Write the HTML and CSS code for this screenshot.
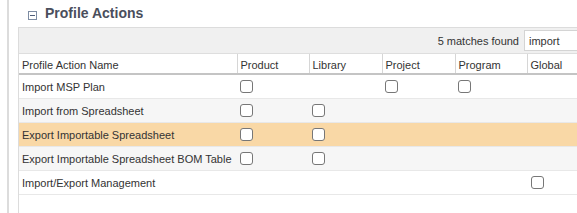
FILE: index.html
```html
<!DOCTYPE html>
<html lang="en">
<head>
  <meta charset="UTF-8" />
  <title>Profile Actions</title>
  <link rel="stylesheet" href="styles.css">
</head>
<body>
  <div class="section">
    <div class="title">
      <svg class="toggle" width="9" height="9" viewBox="0 0 9 9">
        <rect x="0.5" y="0.5" width="8" height="8" fill="#fff" stroke="#7d8ca3" />
        <rect x="2" y="4" width="5" height="1" fill="#4e5d78" />
      </svg>
      <span>Profile Actions</span>
    </div>

    <div class="grid">
      <div class="toolbar">
        <span class="count">5 matches found</span>
        <input type="text" class="search" value="import" />
      </div>

      <table class="actions">
        <colgroup>
          <col style="width: 218px">
          <col style="width: 72px">
          <col style="width: 73px">
          <col style="width: 73px">
          <col style="width: 72px">
          <col style="width: 73px">
        </colgroup>
        <thead>
          <tr>
            <th>Profile Action Name</th>
            <th>Product</th>
            <th>Library</th>
            <th>Project</th>
            <th>Program</th>
            <th>Global</th>
          </tr>
        </thead>
        <tbody>
          <tr>
            <td>Import MSP Plan</td>
            <td><span class="box"></span></td>
            <td></td>
            <td><span class="box"></span></td>
            <td><span class="box"></span></td>
            <td></td>
          </tr>
          <tr class="alt">
            <td>Import from Spreadsheet</td>
            <td><span class="box"></span></td>
            <td><span class="box"></span></td>
            <td></td>
            <td></td>
            <td></td>
          </tr>
          <tr class="selected">
            <td>Export Importable Spreadsheet</td>
            <td><span class="box"></span></td>
            <td><span class="box"></span></td>
            <td></td>
            <td></td>
            <td></td>
          </tr>
          <tr class="alt">
            <td>Export Importable Spreadsheet BOM Table</td>
            <td><span class="box"></span></td>
            <td><span class="box"></span></td>
            <td></td>
            <td></td>
            <td></td>
          </tr>
          <tr>
            <td>Import/Export Management</td>
            <td></td>
            <td></td>
            <td></td>
            <td></td>
            <td><span class="box"></span></td>
          </tr>
        </tbody>
      </table>
    </div>
  </div>
</body>
</html>
```

FILE: styles.css
```css
html, body { margin: 0; height: 100%; overflow: hidden; background: #fff; }
body { font-family: "Liberation Sans", Arial, sans-serif; font-size: 11px; color: #333; }

.section { margin-left: 7px; border-left: 2px solid #dcdcdc; padding-left: 9px; height: 213px; }
.title { height: 27px; display: flex; align-items: flex-start; gap: 8px; padding: 5px 0 0 10px; box-sizing: border-box; }
.title span { font-size: 14px; line-height: 16px; font-weight: bold; color: #4a4e5c; }
.toggle { display: block; margin-top: 6px; }

.grid { width: 582px; height: 186px; border-left: 1px solid #dcdcdc; border-top: 1px solid #dcdcdc; }
.toolbar { height: 25px; background: #f0f0f0; border-bottom: 1px solid #dedede; display: flex; align-items: center; justify-content: flex-end; gap: 5px; padding-right: 2px; }
.count { color: #333; }
.search { width: 75px; height: 21px; box-sizing: border-box; margin: 0; padding: 0 4px; border: 1px solid #d4d4d4; font-family: inherit; font-size: 11px; color: #333; background: #fff; }

.actions { border-collapse: collapse; table-layout: fixed; width: 581px; }
.actions th { height: 16px; padding: 3px 3px 0; text-align: left; font-weight: normal; color: #333; border-right: 1px solid #d6d6d6; border-bottom: 2px solid #c4c4c4; }
.actions th:last-child { border-right: none; }
.actions td { height: 23px; padding: 0 3px; border-bottom: 1px solid #e8e8e8; white-space: nowrap; vertical-align: middle; }
.actions tr.alt td { background: #f6f6f6; }
.actions tr.selected td { background: #f9d8a6; }

.box { display: block; width: 11px; height: 11px; border: 1px solid #777; border-radius: 3px; background: #fff; }
.actions td:last-child .box { margin-left: 1px; }
```
